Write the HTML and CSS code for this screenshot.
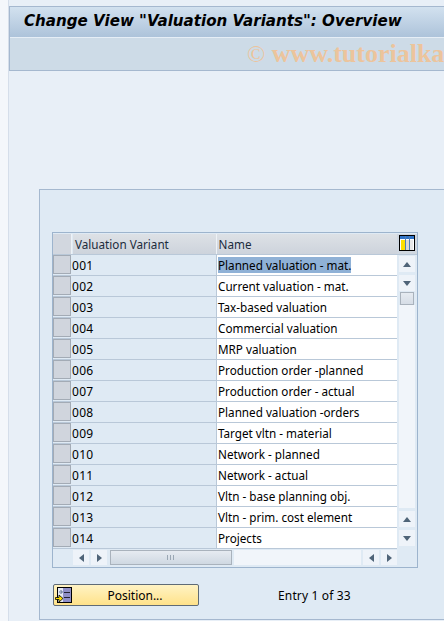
FILE: index.html
```html
<!DOCTYPE html>
<html lang="en">
<head>
  <meta charset="UTF-8" />
  <title>Change View "Valuation Variants": Overview</title>
  <link rel="stylesheet" href="styles.css">
</head>
<body>
  <div class="screen">
    <div class="titlebar">
      <h1 class="title">Change View "Valuation Variants": Overview</h1>
      <div class="toolbar"><span class="watermark"><span class="copy">©</span> www.tutorialka</span></div>
    </div>

    <div class="panel">
      <div class="grid">
        <div class="grid-head">
          <div class="corner"></div>
          <div class="head-cell head-variant">Valuation Variant</div>
          <div class="head-cell head-name">Name</div>
          <div class="head-config">
            <svg width="16" height="16" viewBox="0 0 16 16">
              <rect x="0.5" y="0.5" width="15" height="15" fill="#fff" stroke="#000"/>
              <rect x="1" y="1" width="14" height="3" fill="#2f74c8"/>
              <rect x="2" y="5" width="4" height="10" fill="#ffe000"/>
              <rect x="7" y="5" width="3" height="10" fill="#d8d8d8"/>
              <rect x="11" y="5" width="3" height="10" fill="#e8e8e8"/>
              <path d="M6.5 1v14M10.5 1v14" stroke="#4f7fb8"/>
            </svg>
          </div>
        </div>

        <div class="grid-body">
          <div class="rows">
            <div class="row"><div class="sel"></div><div class="key">001</div><div class="name"><span class="marked">Planned valuation - mat.</span></div></div>
            <div class="row"><div class="sel"></div><div class="key">002</div><div class="name">Current valuation - mat.</div></div>
            <div class="row"><div class="sel"></div><div class="key">003</div><div class="name">Tax-based valuation</div></div>
            <div class="row"><div class="sel"></div><div class="key">004</div><div class="name">Commercial valuation</div></div>
            <div class="row"><div class="sel"></div><div class="key">005</div><div class="name">MRP valuation</div></div>
            <div class="row"><div class="sel"></div><div class="key">006</div><div class="name">Production order -planned</div></div>
            <div class="row"><div class="sel"></div><div class="key">007</div><div class="name">Production order - actual</div></div>
            <div class="row"><div class="sel"></div><div class="key">008</div><div class="name">Planned valuation -orders</div></div>
            <div class="row"><div class="sel"></div><div class="key">009</div><div class="name">Target vltn - material</div></div>
            <div class="row"><div class="sel"></div><div class="key">010</div><div class="name">Network - planned</div></div>
            <div class="row"><div class="sel"></div><div class="key">011</div><div class="name">Network - actual</div></div>
            <div class="row"><div class="sel"></div><div class="key">012</div><div class="name">Vltn - base planning obj.</div></div>
            <div class="row"><div class="sel"></div><div class="key">013</div><div class="name">Vltn - prim. cost element</div></div>
            <div class="row"><div class="sel"></div><div class="key">014</div><div class="name">Projects</div></div>
          </div>

          <div class="vscroll">
            <div class="arrow"><i class="tri tri-up"></i></div>
            <div class="arrow"><i class="tri tri-down"></i></div>
            <div class="vthumb"></div>
            <div class="vtrack"></div>
            <div class="arrow"><i class="tri tri-up"></i></div>
            <div class="arrow"><i class="tri tri-down"></i></div>
          </div>
        </div>

        <div class="hscroll">
          <div class="arrow-h"><i class="tri tri-left"></i></div>
          <div class="arrow-h"><i class="tri tri-right"></i></div>
          <div class="hthumb"><span class="grip"></span></div>
          <div class="htrack"></div>
          <div class="arrow-h"><i class="tri tri-left"></i></div>
          <div class="arrow-h"><i class="tri tri-right"></i></div>
        </div>
      </div>

      <div class="actions">
        <button class="btn-position">
          <svg class="btn-icon" width="17" height="17" viewBox="0 0 17 17">
            <rect x="2.5" y="0.5" width="14" height="15" fill="#e4e9f4" stroke="#000"/>
            <rect x="8" y="1" width="8" height="14" fill="#8f8fc8"/>
            <path d="M9 5.5h6M9 10.5h6" stroke="#223"/>
            <path d="M4 5h3M5.5 3l2 2-2 2" stroke="#5a6a90" fill="none"/>
            <path d="M0.5 10.5h3.5V8l4 3.5-4 3.5v-2.5H0.5z" fill="#ffe000" stroke="#000" stroke-width="0.8"/>
          </svg>
          Position...
        </button>
        <span class="entry">Entry 1 of 33</span>
      </div>
    </div>
  </div>
</body>
</html>
```

FILE: styles.css
```css
html, body {
  margin: 0;
  height: 100%;
  overflow: hidden;
}
body {
  font-family: "Noto Sans", sans-serif;
  background: #f4f7fb;
  color: #000;
}
.screen {
  margin-left: 8px;
  padding-top: 6px;
  height: 615px;
  background: #e8eff7;
  border-left: 1px solid #d5deea;
}
.titlebar {
  border: 1px solid #a5b8cf;
  border-right: none;
}
.title {
  margin: 0;
  height: 30px;
  line-height: 29px;
  padding-left: 14px;
  font-family: "DejaVu Sans", sans-serif;
  font-size: 15.1px;
  font-weight: bold;
  font-style: italic;
  white-space: nowrap;
  background: linear-gradient(#d2e1ef, #adc3da);
  border-bottom: 1px solid #e6eef6;
}
.toolbar {
  height: 32px;
  background: #cddbe7;
  overflow: hidden;
  white-space: nowrap;
  padding-left: 237px;
}
.watermark {
  font-family: "Liberation Serif", serif;
  font-size: 26px;
  font-weight: bold;
  line-height: 32px;
  color: #ecc49c;
}
.copy {
  font-size: 24px;
  font-weight: normal;
}
.panel {
  margin: 118px 0 0 30px;
  height: 431px;
  box-sizing: border-box;
  padding: 42px 0 0 12px;
  background: #dfeaf4;
  border: 1px solid #a5b8cf;
  border-right: none;
}
.grid {
  width: 366px;
  height: 336px;
  box-sizing: border-box;
  border: 1px solid #9db4cd;
  background: #dfeaf4;
  font-size: 11.7px;
}
.grid-head {
  display: flex;
  height: 20px;
  padding-top: 1px;
  border-bottom: 1px solid #b9c8d8;
}
.corner {
  width: 18px;
  background: #d2d7df;
  border-right: 1px solid #eef2f6;
}
.head-cell {
  line-height: 21px;
  padding-left: 2px;
  background: linear-gradient(#dde1e6, #cdd3dc);
  color: #1c2c3c;
  box-sizing: border-box;
}
.head-variant {
  width: 144px;
  margin-left: 1px;
  border-right: 1px solid #eef2f6;
}
.head-name {
  width: 181px;
}
.head-config {
  width: 20px;
  display: flex;
  justify-content: center;
  padding-top: 1px;
  background: #cfd7e0;
}
.grid-body {
  display: flex;
  height: 294px;
}
.rows {
  width: 344px;
}
.row {
  display: flex;
  height: 21px;
  box-sizing: border-box;
  border-bottom: 1px solid #b9c8d8;
  line-height: 21px;
  white-space: nowrap;
}
.sel {
  width: 18px;
  height: 19px;
  margin-right: 1px;
  box-sizing: border-box;
  background: #d0d5dd;
  border: 1px solid #a3abb5;
}
.key {
  width: 144px;
  box-sizing: border-box;
  font-size: 12px;
  letter-spacing: 0.3px;
}
.name {
  width: 181px;
  box-sizing: border-box;
  padding-left: 1px;
  background: #fff;
  border-left: 1px solid #b9c8d8;
  overflow: hidden;
}
.marked {
  background: #8fb1d6;
}
.vscroll {
  width: 20px;
  display: flex;
  flex-direction: column;
  align-items: center;
  padding-top: 1px;
  box-sizing: border-box;
}
.arrow {
  width: 16px;
  height: 16px;
  margin-bottom: 3px;
  background: #eef3f9;
  display: flex;
  align-items: center;
  justify-content: center;
}
.vthumb {
  width: 14px;
  height: 13px;
  margin-top: -2px;
  box-sizing: border-box;
  background: linear-gradient(#e6ebf1, #d6dde6);
  border: 1px solid #a9b2bc;
}
.vtrack {
  flex: 1;
  width: 16px;
  margin-bottom: 3px;
  background: #f1f5fa;
}
.tri {
  display: block;
  width: 0;
  height: 0;
  border: 4px solid transparent;
}
.tri-up {
  border-top: none;
  border-bottom: 5px solid #4f6478;
}
.tri-down {
  border-bottom: none;
  border-top: 5px solid #4f6478;
}
.tri-left {
  border-left: none;
  border-right: 5px solid #4f6478;
}
.tri-right {
  border-right: none;
  border-left: 5px solid #4f6478;
}
.hscroll {
  display: flex;
  height: 19px;
  width: 344px;
  padding: 1px 0 0 20px;
  box-sizing: border-box;
  gap: 2px;
  align-items: flex-start;
}
.arrow-h {
  width: 16px;
  height: 15px;
  background: #eef3f9;
  display: flex;
  align-items: center;
  justify-content: center;
}
.hthumb {
  width: 122px;
  height: 15px;
  margin-left: 1px;
  box-sizing: border-box;
  background: linear-gradient(#e6ebf1, #cfd8e2);
  border: 1px solid #a9b2bc;
  display: flex;
  align-items: center;
  justify-content: center;
}
.grip {
  width: 9px;
  height: 5px;
  background: repeating-linear-gradient(90deg, #9aa7b4 0 1px, transparent 1px 3px);
}
.htrack {
  flex: 1;
  height: 15px;
  background: #f1f5fa;
}
.actions {
  display: flex;
  align-items: center;
  margin-top: 16px;
}
.btn-position {
  position: relative;
  width: 146px;
  height: 22px;
  margin-left: 1px;
  padding: 0 0 0 18px;
  font-family: inherit;
  font-size: 12px;
  color: #000;
  background: linear-gradient(#fff3c4, #ffe28a);
  border: 1px solid #5f6b76;
  border-radius: 2px;
}
.btn-icon {
  position: absolute;
  left: 1px;
  top: 2px;
}
.entry {
  margin-left: 79px;
  font-size: 12px;
  letter-spacing: 0.15px;
}
```
